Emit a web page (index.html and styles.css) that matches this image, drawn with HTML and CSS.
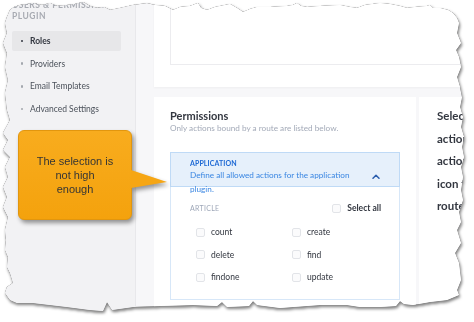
FILE: index.html
```html
<!DOCTYPE html>
<html lang="en">
<head>
<meta charset="utf-8">
<title>Users &amp; Permissions</title>
<link rel="stylesheet" href="styles.css">
</head>
<body>
<div class="frame">
  <div class="paper">
    <aside class="sidebar">
      <div class="side-title"><span>Users &amp; Permissions</span><span>Plugin</span></div>
      <ul class="nav">
        <li class="nav-item active">Roles</li>
        <li class="nav-item">Providers</li>
        <li class="nav-item">Email Templates</li>
        <li class="nav-item">Advanced Settings</li>
      </ul>
    </aside>
    <main class="main">
      <section class="card top-card"><div class="textarea"></div></section>
      <div class="row">
        <section class="card perm-card">
          <h2 class="perm-title">Permissions</h2>
          <p class="perm-sub">Only actions bound by a route are listed below.</p>
          <div class="app-box">
            <div class="app-head">
              <div class="app-text">
                <div class="app-name">Application</div>
                <div class="app-desc">Define all allowed actions for the application plugin.</div>
              </div>
              <svg class="chev" width="8" height="5" viewBox="0 0 8 5"><path d="M1 4.3 L4 1.3 L7 4.3" fill="none" stroke="#2d5fae" stroke-width="1.5" stroke-linecap="round" stroke-linejoin="round"/></svg>
            </div>
            <div class="app-body">
              <div class="article-row">
                <span class="article">Article</span>
                <label class="select-all"><span class="cb"></span>Select all</label>
              </div>
              <div class="actions">
                <label class="action"><span class="cb"></span>count</label>
                <label class="action"><span class="cb"></span>create</label>
                <label class="action"><span class="cb"></span>delete</label>
                <label class="action"><span class="cb"></span>find</label>
                <label class="action"><span class="cb"></span>findone</label>
                <label class="action"><span class="cb"></span>update</label>
              </div>
            </div>
          </div>
        </section>
        <section class="card info-card">
          <span>Select the</span>
          <span>action or</span>
          <span>action and</span>
          <span>icon to</span>
          <span>route</span>
        </section>
      </div>
    </main>
    <div class="callout">
      <div class="callout-box">
        <span>The selection is</span>
        <span>not high</span>
        <span>enough</span>
      </div>
    </div>
  </div>
</div>
</body>
</html>
```
FILE: styles.css
```css
html, body {
  margin: 0;
  padding: 0;
  background: #ffffff;
}
body {
  width: 474px;
  height: 322px;
  overflow: hidden;
  font-family: Lato, "Noto Sans", sans-serif;
}
.frame {
  width: 474px;
  height: 322px;
  filter: drop-shadow(0 0 0.6px #3a3a3a) drop-shadow(1.5px 2px 1.5px rgba(0, 0, 0, 0.5));
}
.paper {
  position: relative;
  width: 474px;
  height: 322px;
  display: flex;
  overflow: hidden;
  background: #f7f7f9;
  clip-path: polygon(
    10px 10px, 14px 7px, 20px 5px, 27px 4px, 33px 3px, 42px 5px, 50px 3px, 57px 6px, 67px 5px, 75px 4px,
    83px 2px, 90px 6px, 97px 8px, 104px 7px, 110px 10px, 120px 8px, 133px 5px, 140px 4px, 147px 3px, 155px 5px,
    165px 6px, 173px 10px, 180px 7px, 190px 6px, 198px 3px, 201px 8px, 207px 10px, 215px 7px, 230px 4px, 237px 8px,
    243px 12px, 250px 9px, 257px 7px, 270px 7px, 287px 6px, 293px 5px, 297px 3px, 301px 6px, 307px 7px, 320px 6px,
    340px 5px, 350px 7px, 357px 8px, 365px 5px, 380px 3px, 390px 4px, 400px 6px, 407px 8px, 415px 7px, 427px 6px,
    430px 5px, 433px 8px, 440px 8px, 448px 10px, 453px 13px, 457px 18px, 459px 23px,
    457px 33px, 461px 43px, 456px 50px, 459px 57px, 461px 67px, 457px 77px, 460px 87px, 462px 97px, 460px 107px,
    463px 117px, 461px 127px, 464px 137px, 462px 147px, 464px 157px, 461px 167px, 463px 177px, 461px 190px,
    463px 200px, 459px 212px, 461px 222px, 457px 230px, 461px 243px, 455px 253px, 459px 263px, 461px 280px,
    457px 290px, 459px 295px,
    447px 300px, 430px 302px, 413px 305px, 404px 304px, 400px 301px, 396px 306px, 380px 307px, 360px 307px,
    347px 305px, 320px 305px, 293px 307px, 280px 308px, 257px 305px, 253px 301px, 249px 306px, 227px 307px,
    222px 302px, 217px 306px, 193px 305px, 160px 306px, 133px 307px, 112px 310px, 107px 302px, 103px 311px,
    90px 310px, 67px 307px, 50px 305px, 33px 303px, 17px 303px, 10px 300px, 5px 293px,
    7px 287px, 13px 283px, 10px 273px, 7px 267px, 8px 257px, 5px 250px, 6px 240px, 5px 230px, 8px 217px,
    3px 207px, 7px 197px, 3px 187px, 8px 177px, 5px 167px, 10px 157px, 3px 150px, 8px 140px, 3px 133px,
    10px 120px, 7px 110px, 5px 93px, 8px 80px, 5px 67px, 7px 53px, 3px 43px, 7px 33px, 5px 23px, 7px 17px
  );
}

/* Sidebar */
.sidebar {
  width: 136px;
  flex: none;
  box-sizing: border-box;
  background: #f2f2f4;
  border-right: 1px solid #e8e8eb;
  padding: 0 14px 0 12px;
}
.side-title {
  font-size: 8.5px;
  font-weight: 700;
  letter-spacing: 0.5px;
  line-height: 11px;
  text-transform: uppercase;
  color: #a8abb2;
}
.side-title span {
  display: block;
  white-space: nowrap;
}
.nav {
  list-style: none;
  margin: 9px 0 0;
  padding: 0;
  display: flex;
  flex-direction: column;
  gap: 2.7px;
}
.nav-item {
  height: 20px;
  display: flex;
  align-items: center;
  gap: 7px;
  padding-left: 8.5px;
  border-radius: 2px;
  font-size: 8.5px;
  color: #4b515a;
}
.nav-item::before {
  content: "";
  width: 2.5px;
  height: 2.5px;
  border-radius: 50%;
  background: #a3a7ae;
}
.nav-item.active {
  background: #e7e7e9;
  font-weight: 700;
  color: #333740;
}
.nav-item.active::before {
  background: #333740;
}

/* Main */
.main {
  flex: 1;
  min-width: 0;
  padding-left: 18px;
  display: flex;
  flex-direction: column;
  gap: 10px;
}
.card {
  background: #ffffff;
}
.top-card {
  margin-top: -20px;
  height: 107px;
  box-sizing: border-box;
  padding: 0 0 22px 16px;
  box-shadow: 0 1px 2px rgba(0, 0, 0, 0.04);
}
.textarea {
  height: 100%;
  box-sizing: border-box;
  border-left: 1px solid #ececef;
  border-bottom: 1px solid #ececef;
}
.row {
  flex: 1;
  display: flex;
  gap: 3px;
}
.perm-card {
  width: 262px;
  flex: none;
  box-sizing: border-box;
  padding: 12px 16px 0;
}
.perm-title {
  margin: 0;
  font-size: 11px;
  font-weight: 700;
  line-height: 14px;
  color: #333740;
}
.perm-sub {
  margin: 0;
  font-size: 8.2px;
  line-height: 11px;
  color: #a3aab8;
}
.app-box {
  margin-top: 18px;
}
.app-head {
  height: 35px;
  box-sizing: border-box;
  background: #e6f0fb;
  border: 1px solid #bfdaf6;
  padding: 5px 19px 0 19px;
  display: flex;
  justify-content: space-between;
  align-items: flex-start;
}
.app-name {
  font-size: 7px;
  font-weight: 700;
  line-height: 10px;
  letter-spacing: 0.1px;
  text-transform: uppercase;
  color: #1d68d4;
}
.app-desc {
  width: 172px;
  font-size: 8.2px;
  line-height: 14px;
  color: #3a86e2;
}
.chev {
  margin-top: 16px;
  flex: none;
}
.app-body {
  height: 113px;
  box-sizing: border-box;
  border: 1px solid #d7e7f8;
  border-top: none;
  padding: 16px 18px 0 19px;
}
.article-row {
  height: 10px;
  display: flex;
  justify-content: space-between;
  align-items: center;
}
.article {
  font-size: 7px;
  letter-spacing: 0.3px;
  text-transform: uppercase;
  color: #9ea7b8;
}
.select-all {
  display: flex;
  align-items: center;
  gap: 6px;
  font-size: 8.5px;
  font-weight: 700;
  color: #333740;
}
.actions {
  margin: 7.75px 0 0 6px;
  display: grid;
  grid-template-columns: 96px 96px;
}
.action {
  height: 22.5px;
  display: flex;
  align-items: center;
  gap: 6px;
  font-size: 8.5px;
  color: #333740;
}
.cb {
  width: 9px;
  height: 9px;
  flex: none;
  box-sizing: border-box;
  border: 1px solid #e2e4e8;
  border-radius: 2px;
  background: #fbfbfc;
}
.info-card {
  flex: 1;
  min-width: 0;
  overflow: hidden;
  padding: 8px 0 0 18px;
  font-size: 11.5px;
  font-weight: 700;
  line-height: 22.6px;
  color: #333740;
}
.info-card span {
  display: block;
  white-space: nowrap;
}

/* Callout */
.callout {
  position: absolute;
  left: 18px;
  top: 130px;
  width: 114px;
  height: 90px;
  filter: drop-shadow(2px 3px 2px rgba(0, 0, 0, 0.4));
}
.callout-box {
  width: 100%;
  height: 100%;
  box-sizing: border-box;
  background: linear-gradient(#f8ac1e, #f4a20d);
  border: 1px solid #e2960e;
  border-radius: 6px;
  display: flex;
  flex-direction: column;
  justify-content: center;
  align-items: center;
  font-family: "Liberation Sans", Arial, sans-serif;
  font-size: 11px;
  line-height: 14px;
  color: #353535;
}
.callout::after {
  content: "";
  position: absolute;
  left: 113px;
  top: 40px;
  width: 36px;
  height: 18px;
  background: #f6a614;
  clip-path: polygon(0 0, 100% 66.7%, 0 100%);
}
```
